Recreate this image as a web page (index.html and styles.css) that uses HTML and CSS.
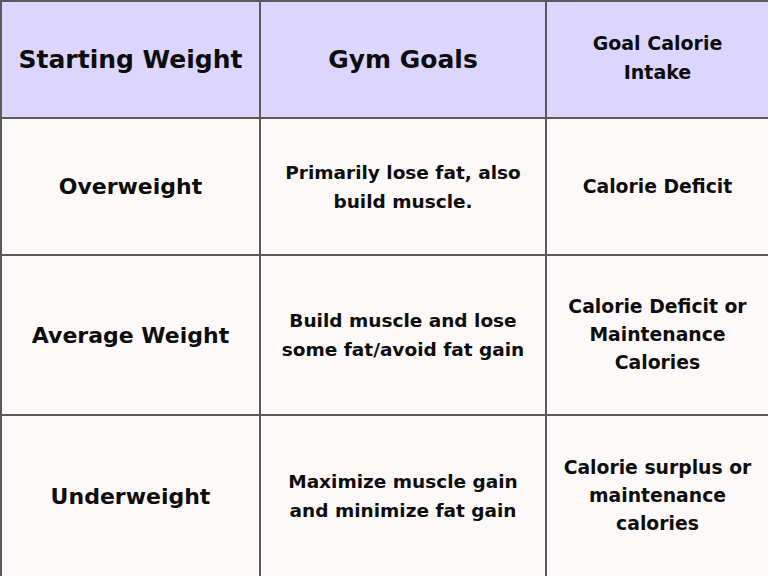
FILE: index.html
```html
<!DOCTYPE html>
<html>
<head>
<meta charset="utf-8">
<link rel="stylesheet" href="styles.css">
</head>
<body>
<table class="grid">
  <colgroup>
    <col class="c1"><col class="c2"><col class="c3">
  </colgroup>
  <thead>
    <tr class="r0">
      <th class="big">Starting Weight</th>
      <th class="big">Gym Goals</th>
      <th>Goal Calorie<br>Intake</th>
    </tr>
  </thead>
  <tbody>
    <tr class="r1">
      <td class="lead">Overweight</td>
      <td>Primarily lose fat, also<br>build muscle.</td>
      <td class="alt">Calorie Deficit</td>
    </tr>
    <tr class="r2">
      <td class="lead">Average Weight</td>
      <td>Build muscle and lose<br>some fat/avoid fat gain</td>
      <td class="alt">Calorie Deficit or<br>Maintenance<br>Calories</td>
    </tr>
    <tr class="r3">
      <td class="lead">Underweight</td>
      <td>Maximize muscle gain<br>and minimize fat gain</td>
      <td class="alt">Calorie surplus or<br>maintenance<br>calories</td>
    </tr>
  </tbody>
</table>
</body>
</html>
```
FILE: styles.css
```css
html, body {
  margin: 0;
  padding: 0;
  background: #fdf9f8;
}
.grid {
  width: 768px;
  height: 576px;
  border-collapse: collapse;
  table-layout: fixed;
  font-family: "DejaVu Sans", sans-serif;
  font-weight: bold;
  color: #0d0d0d;
  text-align: center;
}
.c1 { width: 259px; }
.c2 { width: 286px; }
.c3 { width: 223px; }
.grid th, .grid td {
  border: 2px solid #5a5a5a;
  padding: 0;
  vertical-align: middle;
  font-size: 18.5px;
  line-height: 29px;
}
.grid th {
  background: #dcd6fe;
  font-size: 19px;
  line-height: 29px;
  padding-bottom: 3px;
}
.grid th.big {
  font-size: 25px;
  padding-bottom: 0;
}
.grid td.lead {
  font-size: 22px;
}
.grid td.alt {
  font-size: 18.8px;
  line-height: 28px;
}
.r0 { height: 117px; }
.r1 { height: 137px; }
.r2 { height: 160px; }
.r3 { height: 162px; }
```
